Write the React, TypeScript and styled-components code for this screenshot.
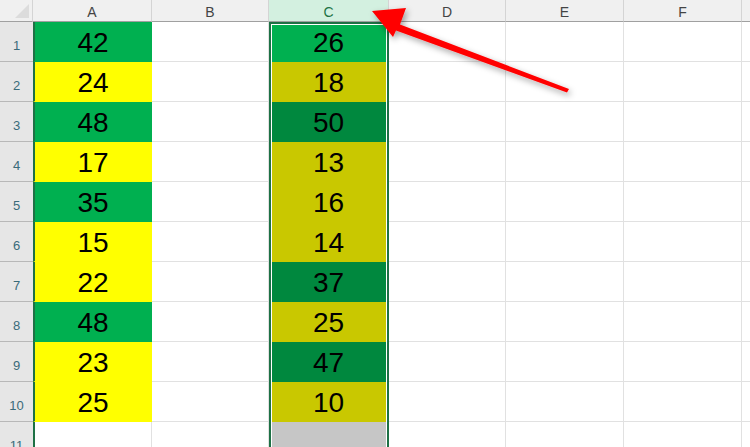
import styled, { createGlobalStyle } from "styled-components";

const GlobalStyle = createGlobalStyle`
  html, body {
    margin: 0;
    padding: 0;
    background: #ffffff;
    overflow: hidden;
  }
  body {
    font-family: "Liberation Sans", Arial, sans-serif;
  }
`;

const COLOR = {
    GREEN: "#00b050",
    DARK_GREEN: "#00883e",
    YELLOW: "#ffff00",
    OLIVE: "#c9c800",
    GRID: "#e1e1e1",
    HEADER_BG: "#f0f0f0",
    ROW_HEADER_BG: "#e6e6e6",
    SELECT: "#1e7145",
};

const columns = ["A", "B", "C", "D", "E", "F"];
const colWidths = [119, 117, 120, 117, 118, 118, 40];

const colA = [42, 24, 48, 17, 35, 15, 22, 48, 23, 25];
const colC = [26, 18, 50, 13, 16, 14, 37, 25, 47, 10];

const fillA = (v: number) => (v >= 30 ? COLOR.GREEN : COLOR.YELLOW);
const fillC = (v: number) => {
    if (v >= 35) return COLOR.DARK_GREEN;
    if (v === 26) return COLOR.GREEN;
    return COLOR.OLIVE;
};

const App = () => {
    const rows = Array.from({ length: 11 }, (_, i) => i + 1);

    return (
        <>
            <GlobalStyle />
            <Sheet>
                <Grid>
                    <Corner>
                        <CornerMark />
                    </Corner>
                    {columns.map((c) => (
                        <ColHeader key={c} active={c === "C"}>{c}</ColHeader>
                    ))}
                    <ColHeader active={false} />

                    {rows.map((r) => (
                        <Row key={r}>
                            <RowHeader>{r}</RowHeader>
                            {colWidths.map((_, ci) => {
                                let bg = "#ffffff";
                                let value: number | null = null;
                                if (ci === 0 && r <= 10) {
                                    value = colA[r - 1];
                                    bg = fillA(value);
                                }
                                if (ci === 2) {
                                    if (r <= 10) {
                                        value = colC[r - 1];
                                        bg = fillC(value);
                                    } else {
                                        bg = "#c6c6c6";
                                    }
                                }
                                return (
                                    <Cell key={ci} fill={bg} filled={bg !== "#ffffff"} first={ci === 0}>
                                        {value}
                                    </Cell>
                                );
                            })}
                        </Row>
                    ))}
                </Grid>
                <Selection />
                <Arrow viewBox="0 0 750 447" width="750" height="447">
                    <defs>
                        <filter id="shadow" x="-20%" y="-20%" width="140%" height="140%">
                            <feDropShadow dx="2" dy="3" stdDeviation="3" floodColor="#000" floodOpacity="0.35" />
                        </filter>
                    </defs>
                    <polygon
                        filter="url(#shadow)"
                        fill="#ff0000"
                        points="372,11 406,8 400,24.5 569,89 567,92.5 396,30.5 393,37"
                    />
                </Arrow>
            </Sheet>
        </>
    );
};

const Sheet = styled.div`
    position: relative;
    width: 750px;
    height: 447px;
    overflow: hidden;
    background: #ffffff;
`;

const Grid = styled.div`
    display: grid;
    grid-template-columns: 33px ${colWidths.map((w) => `${w}px`).join(" ")};
    grid-template-rows: 22px repeat(11, 40px);
`;

const Row = styled.div`
    display: contents;
`;

const Corner = styled.div`
    position: relative;
    background: ${COLOR.HEADER_BG};
    border-right: 1px solid #d4d4d4;
    border-bottom: 1px solid #a0a0a0;
    box-sizing: border-box;
`;

const CornerMark = styled.div`
    position: absolute;
    right: 3px;
    bottom: 3px;
    width: 0;
    height: 0;
    border-left: 14px solid transparent;
    border-bottom: 14px solid #dcdcdc;
`;

const ColHeader = styled.div<{ active: boolean }>`
    display: flex;
    align-items: center;
    justify-content: center;
    box-sizing: border-box;
    background: ${(p) => (p.active ? "#d3f0e0" : COLOR.HEADER_BG)};
    color: ${(p) => (p.active ? "#217346" : "#444444")};
    border-right: 1px solid #d4d4d4;
    border-bottom: 1px solid #a0a0a0;
    font-family: "Liberation Sans", Arial, sans-serif;
    font-size: 14px;
    padding-top: 2px;
`;

const RowHeader = styled.div`
    display: flex;
    align-items: flex-end;
    justify-content: center;
    box-sizing: border-box;
    padding-bottom: 8px;
    background: ${COLOR.ROW_HEADER_BG};
    color: #3a6b7a;
    border-bottom: 1px solid #b8b8b8;
    font-family: "Liberation Sans", Arial, sans-serif;
    font-size: 13px;
`;

const Cell = styled.div<{ fill: string; filled: boolean; first: boolean }>`
    display: flex;
    align-items: center;
    justify-content: center;
    box-sizing: border-box;
    background: ${(p) => p.fill};
    border-right: 1px solid ${(p) => (p.filled ? p.fill : COLOR.GRID)};
    border-bottom: 1px solid ${(p) => (p.filled ? p.fill : COLOR.GRID)};
    border-left: ${(p) => (p.first ? `2px solid ${COLOR.SELECT}` : "none")};
    color: #000000;
    font-family: "Liberation Sans", Arial, sans-serif;
    font-size: 28px;
    padding-top: 2px;
`;

const Selection = styled.div`
    position: absolute;
    left: 269px;
    top: 22px;
    width: 120px;
    height: 430px;
    box-sizing: border-box;
    border: 2px solid ${COLOR.SELECT};
    box-shadow: inset 0 0 0 1px #ffffff;
    pointer-events: none;
`;

const Arrow = styled.svg`
    position: absolute;
    left: 0;
    top: 0;
    pointer-events: none;
`;

export default App;
